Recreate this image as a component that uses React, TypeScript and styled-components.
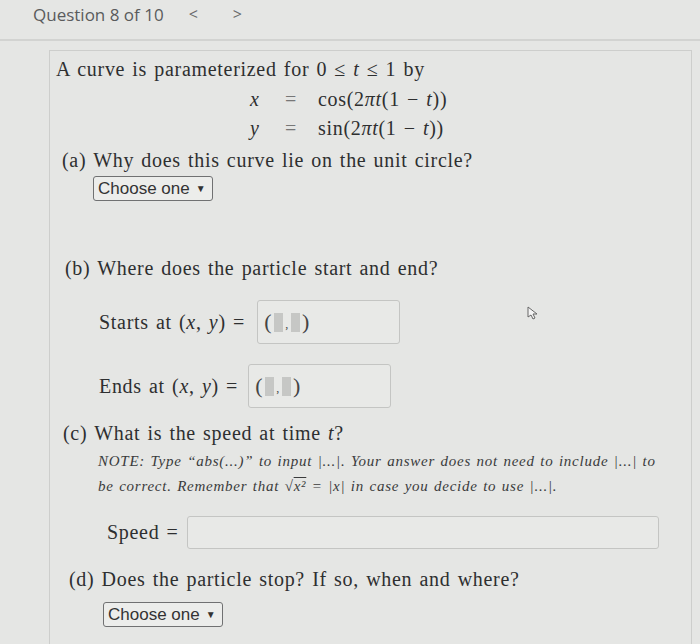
import React from 'react';
import styled, {createGlobalStyle} from 'styled-components';

const Global = createGlobalStyle`
  html, body {
    margin: 0;
    padding: 0;
    background: #e5e6e4;
  }
  body {
    width: 700px;
    height: 644px;
    overflow: hidden;
  }
`;

const Header = styled.div`
  height: 41px;
  display: flex;
  align-items: flex-start;
  padding: 3px 0 0 33px;
  box-sizing: border-box;
  border-bottom: 2px solid #d2d3d1;
  font-family: "Open Sans", "Liberation Sans", sans-serif;
  font-size: 17px;
  color: #5a5b5c;
`;

const NavArrow = styled.span<{$gap: number}>`
  margin-left: ${p => p.$gap}px;
  font-size: 16px;
  color: #6a6b6c;
`;

const Panel = styled.div`
  margin: 9px 8px 0 49px;
  height: 600px;
  border: 1px solid #cdcecc;
  border-bottom: none;
  padding: 6px 0 0 6px;
  font-family: "Liberation Serif", "DejaVu Serif", serif;
  font-size: 20px;
  letter-spacing: 0.7px;
  word-spacing: 1.5px;
  color: #2e2f30;
`;

const Line = styled.div<{$indent?: number; $top?: number}>`
  padding-left: ${p => p.$indent ?? 0}px;
  margin-top: ${p => p.$top ?? 0}px;
  line-height: 24px;
  white-space: nowrap;
`;

const M = styled.i`
  font-style: italic;
`;

const Display = styled.div`
  display: grid;
  grid-template-columns: 14px 54px auto;
  row-gap: 5px;
  margin: 6px 0 0 194px;
  line-height: 24px;
`;

const Eq = styled.span`
  color: #777;
  text-align: center;
`;

const Select = styled.div<{$indent: number; $top: number}>`
  display: inline-flex;
  align-items: center;
  gap: 6px;
  margin: ${p => p.$top}px 0 0 ${p => p.$indent}px;
  height: 23px;
  padding: 0 6px 0 4px;
  border: 1px solid #707172;
  border-radius: 3px;
  font-family: "Liberation Sans", Arial, sans-serif;
  font-size: 17px;
  letter-spacing: 0;
  word-spacing: 0;
  color: #333;
  background: #ecedeb;
`;

const Caret = styled.span`
  font-size: 10px;
`;

const AnswerRow = styled.div<{$indent: number; $top: number}>`
  display: flex;
  align-items: center;
  margin: ${p => p.$top}px 0 0 ${p => p.$indent}px;
`;

const Label = styled.span<{$gap?: number}>`
  margin-right: ${p => p.$gap ?? 5}px;
  white-space: pre;
`;

const Box = styled.div<{$width: number; $height: number}>`
  width: ${p => p.$width}px;
  height: ${p => p.$height}px;
  border: 1px solid #c4c5c3;
  border-radius: 3px;
  box-sizing: border-box;
  display: flex;
  align-items: center;
  padding-left: 6px;
  background: #e8e9e7;
`;

const Paren = styled.span`
  font-size: 22px;
  color: #444;
  display: flex;
  align-items: center;
  gap: 2px;
`;

const Slot = styled.span`
  display: inline-block;
  width: 9px;
  height: 19px;
  background: #c6c7c5;
`;

const Comma = styled.span`
  font-size: 12px;
  align-self: flex-end;
  margin-bottom: 3px;
`;

const Note = styled.div`
  margin: 4px 0 0 42px;
  font-style: italic;
  font-size: 15px;
  letter-spacing: 0.75px;
  word-spacing: 1px;
  line-height: 25px;
  color: #3a3b3c;
  white-space: nowrap;
`;

const Root = styled.span`
  text-decoration: overline;
`;

const Pointer = styled.svg`
  position: absolute;
  left: 527px;
  top: 306px;
`;

function Pair() {
  return (
    <Paren>(<Slot/><Comma>,</Comma><Slot/>)</Paren>
  );
}

export default function App() {
  return (
    <>
      <Global/>
      <Header>
        <span>Question 8 of 10</span>
        <NavArrow $gap={25}>&lt;</NavArrow>
        <NavArrow $gap={35}>&gt;</NavArrow>
      </Header>
      <Panel>
        <Line>A curve is parameterized for 0 ≤ <M>t</M> ≤ 1 by</Line>
        <Display>
          <M>x</M><Eq>=</Eq><span>cos(2<M>πt</M>(1 − <M>t</M>))</span>
          <M>y</M><Eq>=</Eq><span>sin(2<M>πt</M>(1 − <M>t</M>))</span>
        </Display>
        <Line $indent={6} $top={8}>(a) Why does this curve lie on the unit circle?</Line>
        <Select $indent={37} $top={4}>Choose one<Caret>▼</Caret></Select>
        <Line $indent={9} $top={55}>(b) Where does the particle start and end?</Line>
        <AnswerRow $indent={43} $top={20}>
          <Label>Starts at (<M>x</M>, <M>y</M>) = </Label>
          <Box $width={143} $height={44}><Pair/></Box>
        </AnswerRow>
        <AnswerRow $indent={43} $top={20}>
          <Label $gap={3}>Ends at (<M>x</M>, <M>y</M>) = </Label>
          <Box $width={143} $height={44}><Pair/></Box>
        </AnswerRow>
        <Line $indent={7} $top={13}>(c) What is the speed at time <M>t</M>?</Line>
        <Note>
          NOTE: Type “abs(...)” to input |...|. Your answer does not need to include |...| to
          <br/>
          be correct. Remember that √<Root>x²</Root> = |<M>x</M>| in case you decide to use |...|.
        </Note>
        <AnswerRow $indent={51} $top={17}>
          <Label $gap={1}>Speed = </Label>
          <Box $width={472} $height={33}/>
        </AnswerRow>
        <Line $indent={13} $top={18}>(d) Does the particle stop? If so, when and where?</Line>
        <Select $indent={47} $top={11}>Choose one<Caret>▼</Caret></Select>
      </Panel>
      <Pointer width="12" height="14" viewBox="0 0 12 14">
        <path d="M1 1 L1 11 L4 9 L6 13 L8 12 L6 8 L10 8 Z" fill="#f4f4f4" stroke="#666" strokeWidth="1"/>
      </Pointer>
    </>
  );
}
